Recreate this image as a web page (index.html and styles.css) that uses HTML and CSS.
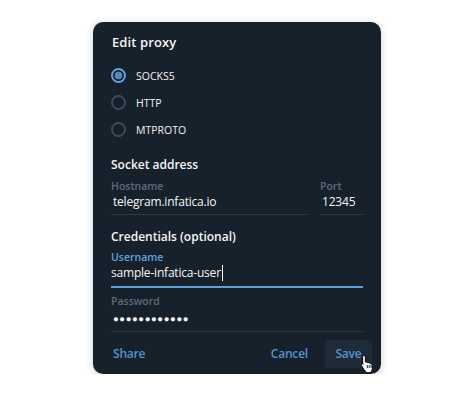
FILE: index.html
```html
<!DOCTYPE html>
<html>
<head>
<meta charset="utf-8">
<link rel="stylesheet" href="styles.css">
</head>
<body>
<div class="card">
  <div class="title">Edit proxy</div>
  <div class="radios">
    <div class="radio checked"><span class="dot"></span><span class="rlabel">SOCKS5</span></div>
    <div class="radio"><span class="dot"></span><span class="rlabel">HTTP</span></div>
    <div class="radio"><span class="dot"></span><span class="rlabel">MTPROTO</span></div>
  </div>
  <div class="section s1">Socket address</div>
  <div class="row">
    <div class="field host">
      <div class="flabel">Hostname</div>
      <div class="fvalue">telegram.infatica.io</div>
    </div>
    <div class="field port">
      <div class="flabel">Port</div>
      <div class="fvalue">12345</div>
    </div>
  </div>
  <div class="section s2">Credentials (optional)</div>
  <div class="field active">
    <div class="flabel">Username</div>
    <div class="fvalue">sample-infatica-user<span class="caret"></span></div>
  </div>
  <div class="field pass">
    <div class="flabel">Password</div>
    <div class="fvalue dots">●●●●●●●●●●●●</div>
  </div>
  <div class="buttons">
    <span class="btn share">Share</span>
    <span class="spacer"></span>
    <span class="btn cancel">Cancel</span>
    <span class="btn save">Save
      <svg class="cursor" width="14" height="18" viewBox="0 0 14 18">
        <path d="M4 1.5c.8 0 1.4.6 1.4 1.4v5.2l.4-.1c.7-.2 1.3.1 1.6.6.6-.3 1.4-.1 1.7.5.6-.3 1.5 0 1.7.7l.1.2c.2 0 1.5.2 1.5 1.6v2.6c0 1.4-.5 2.4-1.2 3.3v1H5.6v-1c-.6-.6-1.2-1.3-1.7-2L1.5 11.6c-.4-.6-.2-1.3.4-1.6.5-.3 1.100-.2 1.5.2l-.7-.4V2.9C2.6 2.1 3.2 1.5 4 1.5z" fill="#fff" stroke="#000" stroke-width="1"/>
        <path d="M7.4 11v3M9.2 11v3M11 11v3" stroke="#000" stroke-width=".8"/>
      </svg>
    </span>
  </div>
</div>
</body>
</html>
```
FILE: styles.css
```css
html, body {
  margin: 0;
  padding: 0;
  background: #ffffff;
}
body {
  font-family: "Open Sans", "Noto Sans", sans-serif;
  color: #f5f5f5;
}
.card {
  position: relative;
  box-sizing: border-box;
  width: 288px;
  height: 352px;
  margin: 22px 0 0 93px;
  padding: 10px 18px 0 18px;
  background: #17212b;
  border-radius: 10px;
  box-shadow: 0 2px 8px rgba(0, 0, 0, 0.18);
  display: flex;
  flex-direction: column;
}
.title {
  font-size: 13px;
  font-weight: 600;
  line-height: 20px;
  padding-left: 1px;
  letter-spacing: 0.1px;
}
.radios {
  margin-top: 10px;
  display: flex;
  flex-direction: column;
}
.radio {
  height: 27px;
  display: flex;
  align-items: center;
  gap: 10px;
}
.dot {
  box-sizing: border-box;
  width: 15px;
  height: 15px;
  border-radius: 50%;
  border: 2px solid #3d4a57;
  position: relative;
}
.radio.checked .dot {
  border-color: #5fa3de;
  background: radial-gradient(circle, #5289bb 0 3.6px, transparent 4.2px);
}
.rlabel {
  font-size: 10.5px;
  line-height: 14px;
  color: #f2f2f2;
}
.section {
  font-size: 12px;
  font-weight: 600;
  line-height: 18px;
}
.s1 { margin-top: 13px; }
.s2 { margin-top: 13px; }
.row {
  display: flex;
  gap: 13px;
  margin-top: 5px;
}
.host { flex: 1; }
.port { width: 43px; }
.flabel {
  font-size: 10.5px;
  font-weight: 600;
  line-height: 14px;
  color: #5b6b7a;
}
.fvalue {
  font-size: 12px;
  letter-spacing: -0.2px;
  line-height: 18px;
  padding: 0 0 3px 2px;
  border-bottom: 1px solid #2b3948;
  color: #f5f5f5;
  white-space: nowrap;
}
.active { margin-top: 4px; }
.active .flabel { color: #5fa3de; }
.active .fvalue {
  border-bottom: 2px solid #5f9fd6;
  padding-bottom: 4px;
  padding-left: 0;
}
.caret {
  display: inline-block;
  width: 1px;
  height: 16px;
  margin-left: 1px;
  background: #ffffff;
  vertical-align: -4px;
}
.pass { margin-top: 6px; }
.pass .flabel { margin-bottom: 2px; }
.fvalue.dots {
  font-size: 9.5px;
  letter-spacing: 0.6px;
  line-height: 18px;
}
.buttons {
  margin-top: 8px;
  margin-right: -9px;
  height: 28px;
  display: flex;
  align-items: center;
}
.spacer { flex: 1; }
.btn {
  font-size: 12px;
  letter-spacing: -0.2px;
  font-weight: 600;
  color: #5393cc;
  line-height: 28px;
}
.share { padding-left: 2px; }
.cancel { margin-right: 17px; }
.save {
  position: relative;
  width: 47px;
  text-align: center;
  background: #1e2b39;
  border-radius: 4px;
}
.cursor {
  position: absolute;
  left: 35px;
  top: 14px;
}
```
